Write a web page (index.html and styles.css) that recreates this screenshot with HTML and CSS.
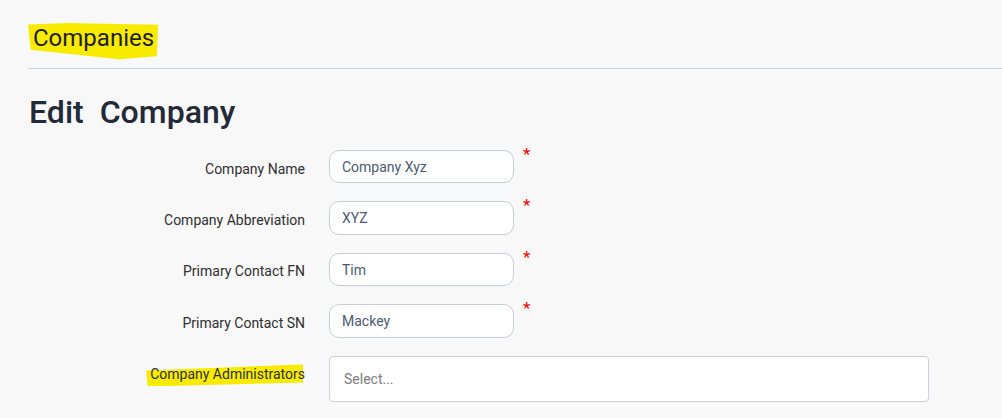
FILE: index.html
```html
<!DOCTYPE html>
<html lang="en">
<head>
<meta charset="utf-8">
<title>Edit Company</title>
<link rel="stylesheet" href="styles.css">
</head>
<body>
<div class="page">
  <header class="topbar">
    <span class="crumb marker marker-top">Companies</span>
  </header>
  <h1 class="title">Edit&nbsp; Company</h1>
  <form class="form">
    <div class="row">
      <label class="label">Company Name</label>
      <input class="field" type="text" value="Company Xyz">
      <span class="req">*</span>
    </div>
    <div class="row">
      <label class="label">Company Abbreviation</label>
      <input class="field" type="text" value="XYZ">
      <span class="req">*</span>
    </div>
    <div class="row">
      <label class="label">Primary Contact FN</label>
      <input class="field" type="text" value="Tim">
      <span class="req">*</span>
    </div>
    <div class="row">
      <label class="label">Primary Contact SN</label>
      <input class="field" type="text" value="Mackey">
      <span class="req">*</span>
    </div>
    <div class="row">
      <label class="label"><span class="marker marker-label">Company Administrators</span></label>
      <div class="select">Select...</div>
    </div>
  </form>
</div>
</body>
</html>
```

FILE: styles.css
```css
html, body {
  margin: 0;
  padding: 0;
  background: #f8f8f8;
  font-family: Roboto, "Liberation Sans", Arial, sans-serif;
  overflow: hidden;
}

.page {
  padding-left: 28px;
}

.topbar {
  padding: 24px 0 16px 5px;
  border-bottom: 1px solid #c3d3e2;
  height: 28px;
}

.crumb {
  font-size: 24px;
  line-height: 28px;
  color: #1f1f1f;
}

.marker {
  position: relative;
  z-index: 0;
  display: inline-block;
}

.marker::before {
  content: "";
  position: absolute;
  z-index: -1;
  background: #f8eb00;
}

.marker-top::before {
  left: -5px;
  right: -4px;
  top: -1px;
  bottom: -8px;
  clip-path: polygon(0% 4%, 30% 0%, 100% 5%, 99% 90%, 70% 98%, 2% 72%);
}

.marker-label::before {
  left: -4px;
  right: 2px;
  top: 0px;
  bottom: -2px;
  clip-path: polygon(0% 28%, 100% 0%, 100% 82%, 1% 100%);
}

.title {
  margin: 25px 0 0 0;
  font-family: "Roboto Medium", Roboto, "Liberation Sans", Arial, sans-serif;
  font-size: 32px;
  line-height: 36px;
  font-weight: 500;
  color: #222a38;
  padding-left: 1px;
}

.form {
  margin-top: 20px;
  display: flex;
  flex-direction: column;
  gap: 18.2px;
}

.row {
  display: flex;
  align-items: flex-start;
}

.label {
  width: 277px;
  flex: none;
  text-align: right;
  font-size: 14px;
  line-height: 20px;
  padding-top: 8.5px;
  color: #2f2f2f;
  margin-right: 24px;
}

.field {
  box-sizing: border-box;
  width: 185px;
  height: 33.3px;
  border: 1px solid #c6ccd8;
  border-radius: 10px;
  background: #fff;
  padding: 0 12px;
  font-family: Roboto, "Liberation Sans", Arial, sans-serif;
  font-size: 14px;
  color: #4c5a72;
  margin: 0;
  outline: none;
}

.req {
  margin-left: 9px;
  margin-top: -5px;
  font-size: 17px;
  line-height: 18px;
  color: #f00000;
}

.select {
  box-sizing: border-box;
  width: 600px;
  height: 46.5px;
  border: 1px solid #cfd1d8;
  border-radius: 4px;
  background: #fff;
  padding-left: 14px;
  font-size: 14px;
  line-height: 44.5px;
  color: #7c7c7c;
}
```
